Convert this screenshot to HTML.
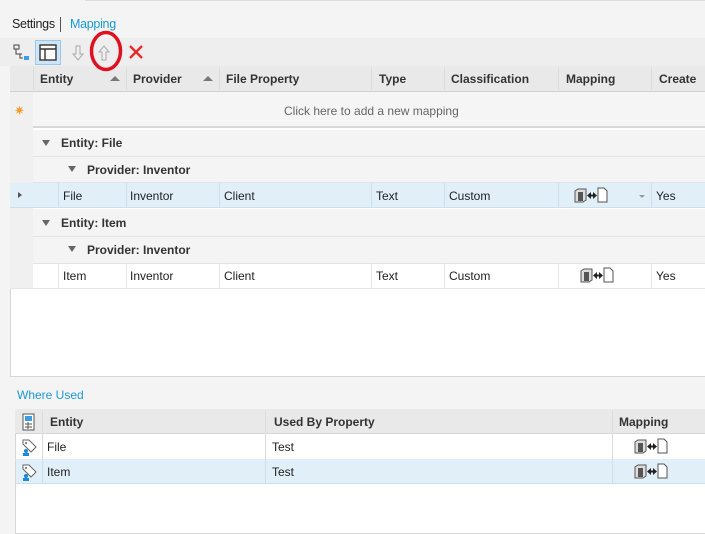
<!DOCTYPE html>
<html><head><style>
*{margin:0;padding:0;box-sizing:border-box}
body{width:705px;height:529px;background:#f4f4f4;font-family:"Liberation Sans",sans-serif;font-size:12px;color:#222;position:relative;overflow:hidden}
.a{position:absolute}
.t{position:absolute;white-space:nowrap;line-height:1}
.b{font-weight:bold;color:#333}
.vl{position:absolute;width:1px;background:#dcdcdc}
.hl{position:absolute;height:1px;background:#e3e3e3}
.tri{position:absolute;width:0;height:0;border-left:4px solid transparent;border-right:4px solid transparent;border-top:6px solid #666}
.up{position:absolute;width:0;height:0;border-left:5px solid transparent;border-right:5px solid transparent;border-bottom:5px solid #777}
</style></head><body>
<div class="a" style="left:85px;top:-1px;width:625px;height:2px;border:1px solid #ddd;background:#fff"></div>
<div class="t" style="left:12px;top:18px;font-size:12.5px;letter-spacing:-0.3px">Settings</div>
<div class="a" style="left:60px;top:17px;width:1px;height:15px;background:#555"></div>
<div class="t" style="left:70px;top:18px;font-size:12.5px;color:#1a9ad6;letter-spacing:-0.3px">Mapping</div>
<div class="a" style="left:0;top:38px;width:705px;height:28px;background:#eeeeee"></div>
<svg class="a" style="left:13px;top:44px" width="18" height="18"><rect x="1" y="1" width="5" height="4" fill="none" stroke="#444"/><path d="M3 5v5h4M7 10h2M7 10v4h3" fill="none" stroke="#444"/><rect x="11" y="12" width="5" height="4" fill="#3a9ee6"/></svg>
<div class="a" style="left:35px;top:40px;width:26px;height:25px;background:#cde5f7;border:1px solid #9cc8eb"></div>
<svg class="a" style="left:39px;top:44px" width="18" height="18"><rect x="1" y="1" width="16" height="15" fill="#fff" stroke="#333" stroke-width="1.4"/><path d="M1 5h16M6 5v11" stroke="#333" stroke-width="1.4"/></svg>
<svg class="a" style="left:71px;top:44px" width="14" height="18"><path d="M5 2h4v8h3l-5 6-5-6h3z" fill="none" stroke="#aaa"/></svg>
<svg class="a" style="left:97px;top:44px" width="14" height="18"><path d="M5 16h4V8h3L7 2 2 8h3z" fill="none" stroke="#aaa"/></svg>
<svg class="a" style="left:128px;top:44px" width="16" height="16"><path d="M2 2l12 12M14 2L2 14" stroke="#e52b2b" stroke-width="2.4"/></svg>
<div class="a" style="left:10px;top:66px;width:700px;height:311px;background:#fff;border:1px solid #d6d6d6"></div>
<div class="a" style="left:10px;top:66px;width:695px;height:26px;background:#e9e9e9;border-bottom:1px solid #d0d0d0"></div>
<div class="a" style="left:10px;top:92px;width:23px;height:197px;background:#f0f0f0"></div>
<div class="t b" style="left:40px;top:73px">Entity</div><div class="up" style="left:110px;top:76px"></div>
<div class="t b" style="left:133px;top:73px">Provider</div><div class="up" style="left:203px;top:76px"></div>
<div class="t b" style="left:226px;top:73px">File Property</div>
<div class="t b" style="left:379px;top:73px">Type</div>
<div class="t b" style="left:451px;top:73px">Classification</div>
<div class="t b" style="left:566px;top:73px">Mapping</div>
<div class="t b" style="left:659px;top:73px">Create</div>
<div class="vl" style="left:33px;top:68px;height:22px"></div><div class="vl" style="left:126px;top:68px;height:22px"></div><div class="vl" style="left:219px;top:68px;height:22px"></div><div class="vl" style="left:371px;top:68px;height:22px"></div><div class="vl" style="left:444px;top:68px;height:22px"></div><div class="vl" style="left:558px;top:68px;height:22px"></div><div class="vl" style="left:651px;top:68px;height:22px"></div>
<div class="a" style="left:33px;top:92px;width:672px;height:36px;background:#f5f5f5;border-bottom:2px solid #d8d8d8"></div>
<div class="t" style="left:14px;top:104px;color:#f39a2b;font-size:13px">✷</div>
<div class="t" style="left:284px;top:105px;color:#666">Click here to add a new mapping</div>
<div class="a" style="left:33px;top:130px;width:672px;height:53px;background:#f4f4f4"></div>
<div class="hl" style="left:33px;top:156px;width:672px"></div>
<div class="hl" style="left:33px;top:182px;width:672px"></div>
<div class="tri" style="left:42px;top:140px"></div><div class="t b" style="left:61px;top:137px">Entity: File</div>
<div class="tri" style="left:68px;top:166px"></div><div class="t b" style="left:87px;top:164px">Provider: Inventor</div>
<div class="a" style="left:10px;top:183px;width:695px;height:25px;background:#e1eff9;border-bottom:1px solid #cfdfea"></div>
<div class="a" style="left:18px;top:192px;border-top:3px solid transparent;border-bottom:3px solid transparent;border-left:4px solid #555"></div>
<div class="a" style="left:33px;top:209px;width:672px;height:54px;background:#f4f4f4"></div>
<div class="hl" style="left:33px;top:236px;width:672px"></div>
<div class="hl" style="left:33px;top:263px;width:672px"></div>
<div class="hl" style="left:10px;top:288px;width:695px;background:#e6e6e6"></div>
<div class="tri" style="left:42px;top:220px"></div><div class="t b" style="left:61px;top:217px">Entity: Item</div>
<div class="tri" style="left:68px;top:246px"></div><div class="t b" style="left:87px;top:244px">Provider: Inventor</div>
<div class="vl" style="left:58px;top:183px;height:25px;background:#cfdfea"></div><div class="vl" style="left:126px;top:183px;height:25px;background:#cfdfea"></div><div class="vl" style="left:219px;top:183px;height:25px;background:#cfdfea"></div><div class="vl" style="left:371px;top:183px;height:25px;background:#cfdfea"></div><div class="vl" style="left:444px;top:183px;height:25px;background:#cfdfea"></div><div class="vl" style="left:558px;top:183px;height:25px;background:#cfdfea"></div><div class="vl" style="left:651px;top:183px;height:25px;background:#cfdfea"></div>
<div class="t" style="left:63px;top:190px">File</div><div class="t" style="left:130px;top:190px">Inventor</div><div class="t" style="left:224px;top:190px">Client</div><div class="t" style="left:376px;top:190px">Text</div><div class="t" style="left:449px;top:190px">Custom</div><div class="t" style="left:656px;top:190px">Yes</div>
<div class="a" style="left:639px;top:195px;border-left:3px solid transparent;border-right:3px solid transparent;border-top:3px solid #999"></div>
<div class="vl" style="left:58px;top:263px;height:25px;background:#e6e6e6"></div><div class="vl" style="left:126px;top:263px;height:25px;background:#e6e6e6"></div><div class="vl" style="left:219px;top:263px;height:25px;background:#e6e6e6"></div><div class="vl" style="left:371px;top:263px;height:25px;background:#e6e6e6"></div><div class="vl" style="left:444px;top:263px;height:25px;background:#e6e6e6"></div><div class="vl" style="left:558px;top:263px;height:25px;background:#e6e6e6"></div><div class="vl" style="left:651px;top:263px;height:25px;background:#e6e6e6"></div>
<div class="t" style="left:63px;top:270px">Item</div><div class="t" style="left:130px;top:270px">Inventor</div><div class="t" style="left:224px;top:270px">Client</div><div class="t" style="left:376px;top:270px">Text</div><div class="t" style="left:449px;top:270px">Custom</div><div class="t" style="left:656px;top:270px">Yes</div>
<svg width="0" height="0" style="position:absolute"><defs><g id="m"><path d="M1 4l3-2h8v11l-3 2H1z" fill="#ddd" stroke="#555"/><rect x="4" y="5" width="5" height="9" fill="#555"/><line x1="15" y1="8.5" x2="21" y2="8.5" stroke="#222" stroke-width="2"/><path d="M13 8.5l4-3.5v7zM23 8.5l-4-3.5v7z" fill="#222"/><path d="M24 1h6l3 3v11H24z" fill="#fff" stroke="#555"/></g></defs></svg>
<svg class="a" style="left:574px;top:187px" width="36" height="17"><use href="#m"/></svg>
<svg class="a" style="left:580px;top:267px" width="36" height="17"><use href="#m"/></svg>
<svg class="a" style="left:89px;top:30px" width="38" height="44"><ellipse cx="17" cy="21" rx="14.5" ry="18.5" fill="none" stroke="#e01020" stroke-width="3.5"/></svg>
<div class="t" style="left:17px;top:389px;color:#1a9ad6">Where Used</div>
<div class="a" style="left:15px;top:409px;width:695px;height:125px;background:#fff;border:1px solid #d6d6d6"></div>
<div class="a" style="left:15px;top:409px;width:690px;height:25px;background:#e9e9e9;border-bottom:1px solid #d6d6d6"></div>
<svg class="a" style="left:22px;top:413px" width="14" height="18"><rect x="1" y="1" width="11" height="16" fill="#fff" stroke="#555"/><rect x="3" y="3" width="7" height="5" fill="#3a9ee6"/><path d="M3 11h7M3 14h7M6 9v7" stroke="#555"/></svg>
<div class="t b" style="left:50px;top:416px">Entity</div><div class="t b" style="left:274px;top:416px">Used By Property</div><div class="t b" style="left:619px;top:416px">Mapping</div>
<div class="vl" style="left:42px;top:411px;height:73px"></div><div class="vl" style="left:265px;top:411px;height:73px"></div><div class="vl" style="left:612px;top:411px;height:73px"></div>
<div class="hl" style="left:15px;top:459px;width:690px"></div>
<div class="a" style="left:16px;top:459px;width:689px;height:25px;background:#e1eff9;border-bottom:1px solid #cfdfea"></div>
<div class="vl" style="left:42px;top:459px;height:25px;background:#cfdfea"></div><div class="vl" style="left:265px;top:459px;height:25px;background:#cfdfea"></div><div class="vl" style="left:612px;top:459px;height:25px;background:#cfdfea"></div>
<svg width="0" height="0" style="position:absolute"><defs><g id="tg"><path d="M2 2h6l7 7-5 5-8-8z" fill="#fff" stroke="#666"/><circle cx="5" cy="5" r="1" fill="#666"/><circle cx="5" cy="13" r="2" fill="#1a8ad6"/><rect x="2" y="15" width="6" height="3" fill="#1a8ad6"/></g></defs></svg>
<svg class="a" style="left:21px;top:438px" width="18" height="19"><use href="#tg"/></svg>
<svg class="a" style="left:21px;top:463px" width="18" height="19"><use href="#tg"/></svg>
<div class="t" style="left:47px;top:441px">File</div><div class="t" style="left:272px;top:441px">Test</div>
<div class="t" style="left:47px;top:466px">Item</div><div class="t" style="left:272px;top:466px">Test</div>
<svg class="a" style="left:634px;top:438px" width="36" height="17"><use href="#m"/></svg>
<svg class="a" style="left:634px;top:463px" width="36" height="17"><use href="#m"/></svg>
</body></html>
